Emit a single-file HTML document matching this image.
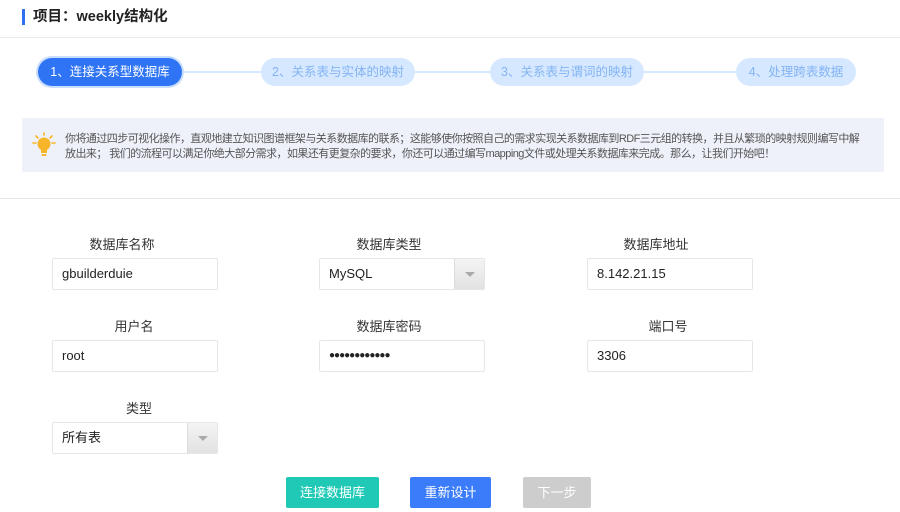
<!DOCTYPE html>
<html><head><meta charset="utf-8"><style>
*{box-sizing:border-box;margin:0;padding:0}
body{width:900px;height:512px;background:#fff;font-family:"Liberation Sans","Noto Sans CJK SC",sans-serif;position:relative;overflow:hidden;color:#333}
.a{position:absolute}
.title{left:22px;top:9px;font-size:14.5px;font-weight:bold;color:#222;padding-left:8px;border-left:3px solid #2f6ff0;line-height:16px}
.hl{left:0;width:900px;height:1px;background:#eaeaea}
.pill{height:28px;border-radius:14px;background:#d6e8ff;color:#84b4f3;font-size:12.5px;line-height:28px;text-align:center;top:58px}
.lbl{font-size:13px;color:#333;text-align:center;width:140px}
.inp{height:32px;border:1px solid #e6e6e6;border-radius:2px;font-size:13px;color:#222;line-height:30px;padding-left:9px;width:166px}
.sel .dd{position:absolute;right:0;top:0;width:30px;height:30px;background:linear-gradient(#f4f4f4,#e2e2e2);border-left:1px solid #ddd}
.sel .dd:after{content:"";position:absolute;left:10px;top:13px;border-left:5px solid transparent;border-right:5px solid transparent;border-top:5px solid #aaa}
.btn{top:477px;height:31px;color:#fff;font-size:13px;line-height:31px;text-align:center;border-radius:2px}
</style></head><body>
<div class="a title">项目：weekly结构化</div>
<div class="a hl" style="top:37px"></div>
<div class="a" style="left:180px;top:71px;width:560px;height:2px;background:#d6e8ff"></div>
<div class="a pill" style="left:38px;width:144px;background:#2f74f5;color:#fff;box-shadow:0 0 0 2px #c8defc">1、连接关系型数据库</div>
<div class="a pill" style="left:261px;width:154px">2、关系表与实体的映射</div>
<div class="a pill" style="left:490px;width:154px">3、关系表与谓词的映射</div>
<div class="a pill" style="left:736px;width:120px">4、处理跨表数据</div>
<div class="a" style="left:22px;top:118px;width:862px;height:54px;background:#eef1fa;border-radius:2px"></div>
<svg class="a" style="left:32px;top:132px" width="24" height="26" viewBox="0 0 24 26">
<g stroke="#f7b529" stroke-width="1.6" stroke-linecap="round"><line x1="1" y1="11" x2="4" y2="11"/><line x1="20" y1="11" x2="23" y2="11"/><line x1="4" y1="4" x2="6" y2="6"/><line x1="20" y1="4" x2="18" y2="6"/><line x1="12" y1="1" x2="12" y2="3"/></g>
<circle cx="12" cy="12" r="6.5" fill="#f7b529"/><rect x="9" y="17" width="6" height="4" fill="#f7b529"/><rect x="9.5" y="22" width="5" height="2" rx="1" fill="#f7b529"/></svg>
<div class="a" style="left:65px;top:132px;white-space:nowrap;font-size:11px;letter-spacing:-0.55px;line-height:14.5px;color:#555">你将通过四步可视化操作，直观地建立知识图谱框架与关系数据库的联系；这能够使你按照自己的需求实现关系数据库到RDF三元组的转换，并且从繁琐的映射规则编写中解<br>放出来； 我们的流程可以满足你绝大部分需求，如果还有更复杂的要求，你还可以通过编写mapping文件或处理关系数据库来完成。那么，让我们开始吧！</div>
<div class="a hl" style="top:198px;background:#e4e4e4"></div>

<div class="a lbl" style="left:52px;top:234px">数据库名称</div>
<div class="a lbl" style="left:319px;top:234px">数据库类型</div>
<div class="a lbl" style="left:586px;top:234px">数据库地址</div>
<div class="a inp" style="left:52px;top:258px">gbuilderduie</div>
<div class="a inp sel" style="left:319px;top:258px">MySQL<div class="dd"></div></div>
<div class="a inp" style="left:587px;top:258px">8.142.21.15</div>

<div class="a lbl" style="left:64px;top:316px">用户名</div>
<div class="a lbl" style="left:319px;top:316px">数据库密码</div>
<div class="a lbl" style="left:598px;top:316px">端口号</div>
<div class="a inp" style="left:52px;top:340px">root</div>
<div class="a inp" style="left:319px;top:340px;font-size:10px;letter-spacing:-1px">●●●●●●●●●●●●</div>
<div class="a inp" style="left:587px;top:340px">3306</div>

<div class="a lbl" style="left:69px;top:398px">类型</div>
<div class="a inp sel" style="left:52px;top:422px">所有表<div class="dd"></div></div>

<div class="a btn" style="left:286px;width:93px;background:#1fc9b6">连接数据库</div>
<div class="a btn" style="left:410px;width:81px;background:#3a7cf9">重新设计</div>
<div class="a btn" style="left:523px;width:68px;background:#cdcdcd">下一步</div>
</body></html>
